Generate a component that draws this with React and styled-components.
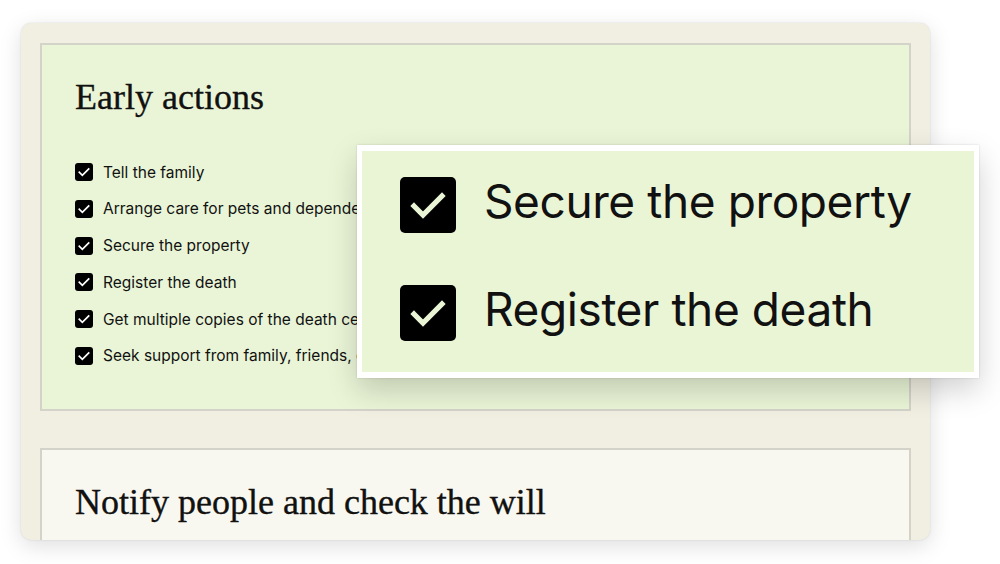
import React from "react";
import styled, { createGlobalStyle } from "styled-components";

const Global = createGlobalStyle`
  html, body { margin: 0; padding: 0; background: #ffffff; }
  body { width: 1000px; height: 564px; overflow: hidden; }
`;

const Stage = styled.div`
  position: relative;
  width: 1000px;
  height: 564px;
  padding: 23px 0 0 21px;
  box-sizing: border-box;
`;

const Window = styled.div`
  width: 909px;
  height: 517px;
  background: #f1eee2;
  border-radius: 10px;
  box-shadow: 0 6px 22px rgba(0, 0, 0, 0.13), 0 0 2px rgba(0, 0, 0, 0.12);
  padding: 20px 19px 0 19px;
  box-sizing: border-box;
  overflow: hidden;
  display: flex;
  flex-direction: column;
  gap: 37px;
`;

const Panel = styled.section`
  flex: none;
  background: ${(p) => p.$bg};
  border: 2px solid #d3d3ca;
  padding: 30px 34px 30px 33px;
  box-sizing: border-box;
  height: ${(p) => p.$h};
`;

const Heading = styled.h2`
  margin: 0;
  font-family: "Liberation Serif", "DejaVu Serif", serif;
  font-weight: 400;
  font-size: 36px;
  line-height: 44px;
  color: #111;
  -webkit-text-stroke: 0.35px #111;
`;

const List = styled.ul`
  list-style: none;
  margin: 43px 0 0 0;
  padding: 0;
  display: flex;
  flex-direction: column;
  gap: 16.8px;
`;

const Item = styled.li`
  display: flex;
  align-items: center;
  gap: 10px;
  height: 20px;
  font-family: "Inter", "Noto Sans", sans-serif;
  font-size: 15.5px;
  color: #111;
  white-space: nowrap;
`;

const Box = styled.span`
  flex: none;
  width: ${(p) => p.$s}px;
  height: ${(p) => p.$s}px;
  border-radius: ${(p) => p.$r}px;
  background: #000;
  display: flex;
  align-items: center;
  justify-content: center;
`;

const Zoom = styled.div`
  position: absolute;
  left: 357px;
  top: 145px;
  width: 622px;
  height: 233px;
  background: #ffffff;
  padding: 6px 5px;
  box-sizing: border-box;
  box-shadow: 0 12px 28px rgba(0, 0, 0, 0.18), 0 0 2px rgba(0, 0, 0, 0.15);
`;

const ZoomInner = styled.div`
  height: 100%;
  background: #eaf5d6;
  padding: 26px 0 0 38px;
  box-sizing: border-box;
  display: flex;
  flex-direction: column;
  gap: 52px;
`;

const BigItem = styled.div`
  display: flex;
  align-items: center;
  gap: 28px;
  height: 56px;
  font-family: "Inter", "Noto Sans", sans-serif;
  font-size: 46px;
  letter-spacing: -0.4px;
  color: #111;
  white-space: nowrap;
`;

const BigLabel = styled.span`
  margin-top: -8px;
`;

const Check = ({ size, color, sw }) => (
  <svg width={size} height={size} viewBox="0 0 24 24" fill="none">
    <path
      d="M5 12.5l4.5 4.5L19 7.5"
      stroke={color}
      strokeWidth={sw}
      strokeLinecap="square"
      strokeLinejoin="miter"
    />
  </svg>
);

const items = [
  "Tell the family",
  "Arrange care for pets and dependents",
  "Secure the property",
  "Register the death",
  "Get multiple copies of the death certificate",
  "Seek support from family, friends, community and professionals",
];

export default function App() {
  return (
    <>
      <Global />
      <Stage>
        <Window>
          <Panel $bg="#eaf5d7" $h="368px">
            <Heading>Early actions</Heading>
            <List>
              {items.map((t) => (
                <Item key={t}>
                  <Box $s={18} $r={3}>
                    <Check size={16} color="#fff" sw={2.6} />
                  </Box>
                  {t}
                </Item>
              ))}
            </List>
          </Panel>
          <Panel $bg="#f9f8f0" $h="200px">
            <Heading>Notify people and check the will</Heading>
          </Panel>
        </Window>
        <Zoom>
          <ZoomInner>
            <BigItem>
              <Box $s={56} $r={5}>
                <Check size={48} color="#eaf5d6" sw={2.6} />
              </Box>
              <BigLabel>Secure the property</BigLabel>
            </BigItem>
            <BigItem>
              <Box $s={56} $r={5}>
                <Check size={48} color="#eaf5d6" sw={2.6} />
              </Box>
              <BigLabel>Register the death</BigLabel>
            </BigItem>
          </ZoomInner>
        </Zoom>
      </Stage>
    </>
  );
}
